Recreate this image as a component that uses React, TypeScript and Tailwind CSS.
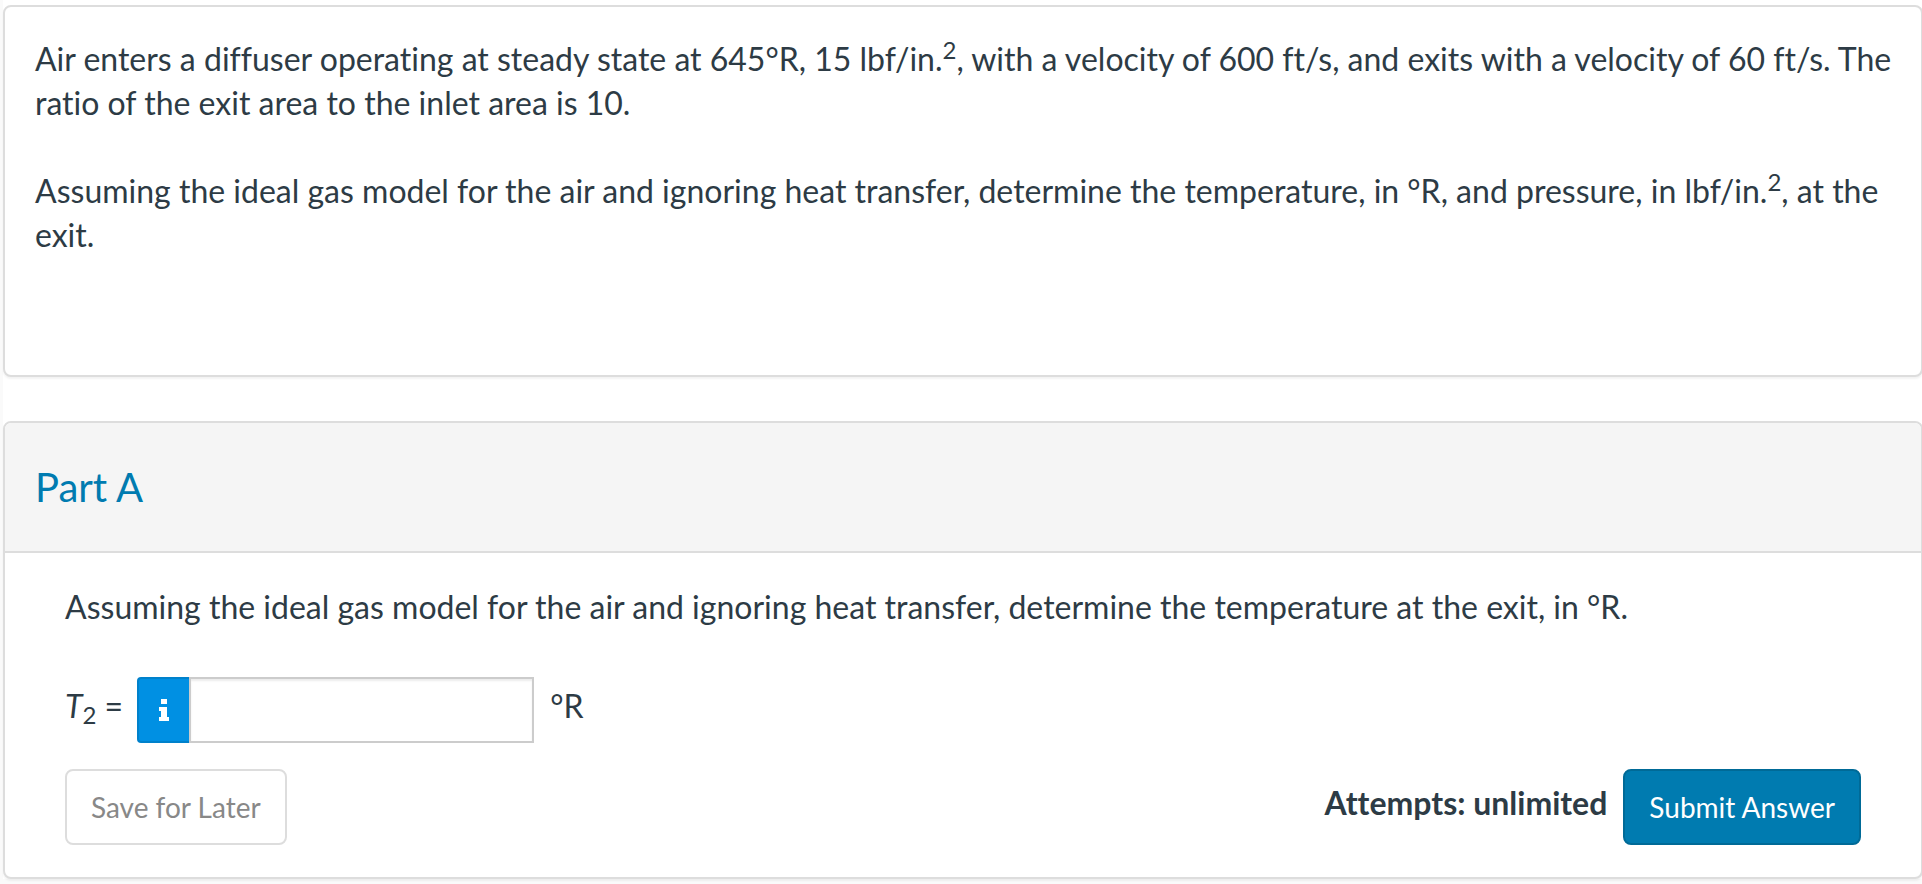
import { useState } from 'react';

import type { ReactNode } from 'react';

function Card({ children }: { children: ReactNode }) {
  return (
    <section className="overflow-hidden rounded-lg border-2 border-[#ddd] bg-white shadow-[0_2px_2px_rgba(0,0,0,0.05)]">
      {children}
    </section>
  );
}

function InfoIcon() {
  return (
    <svg viewBox="0 0 12 24" className="h-6 w-3" fill="currentColor" aria-hidden>
      <path d="M3 1h6v5H3zM1 9h8v10h2v4H1v-4h2v-6H1z" />
    </svg>
  );
}

function Question() {
  return (
    <Card>
      <div className="pt-[30px] pr-5 pb-[118px] pl-[30px]">
        <p className="mb-11">
          Air enters a diffuser operating at steady state at 645°R, 15 lbf/in.<sup>2</sup>, with a
          velocity of 600 ft/s, and exits with a velocity of 60 ft/s. The ratio of the exit area to
          the inlet area is 10.
        </p>
        <p>
          Assuming the ideal gas model for the air and ignoring heat transfer, determine the
          temperature, in °R, and pressure, in lbf/in.<sup>2</sup>, at the exit.
        </p>
      </div>
    </Card>
  );
}

function PartA() {
  const [answer, setAnswer] = useState('');

  return (
    <Card>
      <header className="border-b-2 border-[#ddd] bg-[#f5f5f5] px-[30px] py-10">
        <h2 className="text-[40px] leading-[48px] text-[#007bb0]">Part A</h2>
      </header>
      <form className="px-[60px] py-8" onSubmit={(e) => e.preventDefault()}>
        <p>
          Assuming the ideal gas model for the air and ignoring heat transfer, determine the
          temperature at the exit, in °R.
        </p>
        <div className="mt-12 flex items-center gap-4">
          <div className="flex items-center gap-3.5">
            <label htmlFor="t2" className="pb-2">
              <i>T</i>
              <sub>2</sub> =
            </label>
            <div className="flex h-[66px]">
              <button
                type="button"
                aria-label="Answer format help"
                className="flex w-[52px] items-center justify-center rounded-l border-2 border-r-0 border-[#0081cb] bg-[#0090e3] text-white"
              >
                <InfoIcon />
              </button>
              <input
                id="t2"
                type="text"
                value={answer}
                onChange={(e) => setAnswer(e.target.value)}
                className="w-[345px] border-2 border-[#ccc] px-4 shadow-[inset_0_2px_2px_rgba(0,0,0,0.075)] outline-none"
              />
            </div>
          </div>
          <span className="pb-2">°R</span>
        </div>
        <div className="mt-[26px] flex items-center justify-between">
          <button
            type="button"
            className="h-[76px] rounded-lg border-2 border-[#ddd] px-6 text-[28px] text-[#888]"
          >
            Save for Later
          </button>
          <div className="flex items-center gap-4">
            <strong className="pb-2 font-bold">Attempts: unlimited</strong>
            <button
              type="submit"
              className="h-[76px] rounded-lg border-2 border-[#006a97] bg-[#007bb0] px-6 text-[28px] text-white"
            >
              Submit Answer
            </button>
          </div>
        </div>
      </form>
    </Card>
  );
}

export default function App() {
  return (
    <main className="overflow-hidden bg-[#fafafa] pb-[5px] pl-[3px] font-['Lato',sans-serif] text-[32px] leading-[44px] text-[#2d3b45] [font-variant-ligatures:none]">
      <div className="-mr-px flex flex-col gap-11 bg-white pt-[5px]">
        <Question />
        <PartA />
      </div>
    </main>
  );
}
